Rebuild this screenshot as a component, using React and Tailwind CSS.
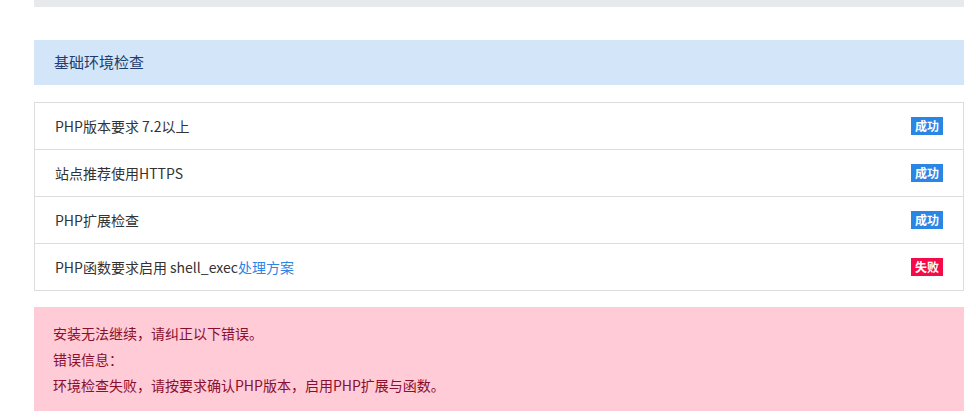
const checks = [
  { label: 'PHP版本要求 7.2以上', ok: true },
  { label: '站点推荐使用HTTPS', ok: true },
  { label: 'PHP扩展检查', ok: true },
  { label: 'PHP函数要求启用 shell_exec', ok: false, link: '处理方案' },
];

const Badge = ({ ok }) => (
  <span
    className={`inline-flex h-[18px] items-center px-[4px] text-[12px] font-bold leading-none text-white ${
      ok ? 'bg-[#2a86e4]' : 'bg-[#f50b4a]'
    }`}
  >
    {ok ? '成功' : '失败'}
  </span>
);

const App = () => {
  return (
    <div
      className="min-h-[419px] bg-white text-[14px] text-[#333]"
      style={{ fontFamily: '"Noto Sans CJK SC", "Noto Sans", sans-serif' }}
    >
      <div className="ml-[34px] w-[930px]">
        <div className="h-[7px] bg-[#e7eaed]" />

        <div className="mt-[33px] flex h-[45px] items-center bg-[#d3e5f9] px-[20px] text-[15px] text-[#1f3d6c]">
          基础环境检查
        </div>

        <div className="mt-[17px] border border-[#dddddd]">
          {checks.map((item, index) => (
            <div
              key={index}
              className={`flex h-[46px] items-center justify-between pl-[20px] pr-[20px] ${
                index > 0 ? 'h-[47px] border-t border-[#dddddd]' : ''
              }`}
            >
              <span>
                {item.label}
                {item.link && <a href="#" className="text-[#2f84e6]">{item.link}</a>}
              </span>
              <Badge ok={item.ok} />
            </div>
          ))}
        </div>

        <div className="mt-[16px] bg-[#ffcbd6] px-[19px] py-[13px] leading-[26px] text-[#8b0d2f]">
          <p>安装无法继续，请纠正以下错误。</p>
          <p>错误信息：</p>
          <p>环境检查失败，请按要求确认PHP版本，启用PHP扩展与函数。</p>
        </div>
      </div>
    </div>
  );
};

export default App;
